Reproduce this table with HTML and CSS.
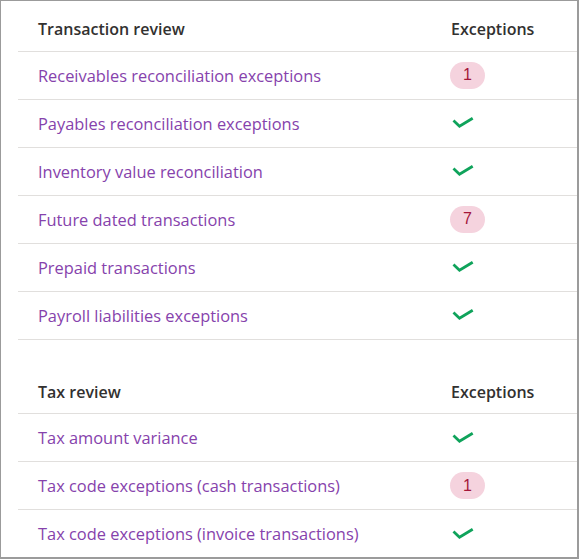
FILE: index.html
```html
<!DOCTYPE html>
<html>
<head>
<meta charset="utf-8">
<link rel="stylesheet" href="styles.css">
</head>
<body>
<div class="frame">
  <table class="review">
    <thead>
      <tr><th class="name">Transaction review</th><th class="exc">Exceptions</th></tr>
    </thead>
    <tbody>
      <tr><td class="name"><a>Receivables reconciliation exceptions</a></td><td class="exc"><span class="badge">1</span></td></tr>
      <tr><td class="name"><a>Payables reconciliation exceptions</a></td><td class="exc"><svg class="check" viewBox="0 0 20 10"><path d="M1.5 3.5 L6.5 8.2 L18.5 1"/></svg></td></tr>
      <tr><td class="name"><a>Inventory value reconciliation</a></td><td class="exc"><svg class="check" viewBox="0 0 20 10"><path d="M1.5 3.5 L6.5 8.2 L18.5 1"/></svg></td></tr>
      <tr><td class="name"><a>Future dated transactions</a></td><td class="exc"><span class="badge">7</span></td></tr>
      <tr><td class="name"><a>Prepaid transactions</a></td><td class="exc"><svg class="check" viewBox="0 0 20 10"><path d="M1.5 3.5 L6.5 8.2 L18.5 1"/></svg></td></tr>
      <tr><td class="name"><a>Payroll liabilities exceptions</a></td><td class="exc"><svg class="check" viewBox="0 0 20 10"><path d="M1.5 3.5 L6.5 8.2 L18.5 1"/></svg></td></tr>
    </tbody>
  </table>
  <table class="review second">
    <thead>
      <tr><th class="name">Tax review</th><th class="exc">Exceptions</th></tr>
    </thead>
    <tbody>
      <tr><td class="name"><a>Tax amount variance</a></td><td class="exc"><svg class="check" viewBox="0 0 20 10"><path d="M1.5 3.5 L6.5 8.2 L18.5 1"/></svg></td></tr>
      <tr><td class="name"><a>Tax code exceptions (cash transactions)</a></td><td class="exc"><span class="badge">1</span></td></tr>
      <tr><td class="name"><a>Tax code exceptions (invoice transactions)</a></td><td class="exc"><svg class="check" viewBox="0 0 20 10"><path d="M1.5 3.5 L6.5 8.2 L18.5 1"/></svg></td></tr>
    </tbody>
  </table>
</div>
</body>
</html>
```

FILE: styles.css
```css
* { box-sizing: border-box; }
html, body { margin: 0; padding: 0; background: #fff; }
body { font-family: "Open Sans", "Noto Sans", sans-serif; }
.frame {
  width: 579px;
  height: 559px;
  border: 1px solid #9b9b9b;
  border-right-width: 2px;
  border-bottom-width: 2px;
  padding: 7px 0 0 17px;
  overflow: hidden;
}
.review {
  width: 100%;
  border-collapse: collapse;
  table-layout: fixed;
}
.review.second { margin-top: 31px; }
.review th {
  height: 43px;
  text-align: left;
  font-weight: 600;
  font-size: 16px;
  color: #323130;
  padding: 0 0 0 20px;
  border-bottom: 1px solid #e1dfdd;
  vertical-align: middle;
}
.review td {
  height: 48px;
  padding: 0 0 0 20px;
  border-bottom: 1px solid #e1dfdd;
  vertical-align: middle;
  font-size: 16.4px;
}
.review .name { width: 413px; }
.review a { color: #8642ac; }
.badge {
  display: inline-flex;
  align-items: center;
  justify-content: center;
  width: 35px;
  height: 27px;
  border-radius: 14px;
  background: #f5d3de;
  color: #a4163a;
  font-family: "Liberation Sans", sans-serif;
  font-size: 16px;
  margin-left: -1px;
}
.check {
  display: block;
  width: 20px;
  height: 10px;
  margin-left: 2px;
  overflow: visible;
}
.check path {
  fill: none;
  stroke: #0fa35b;
  stroke-width: 2.8;
  stroke-linecap: square;
  stroke-linejoin: miter;
}
```
